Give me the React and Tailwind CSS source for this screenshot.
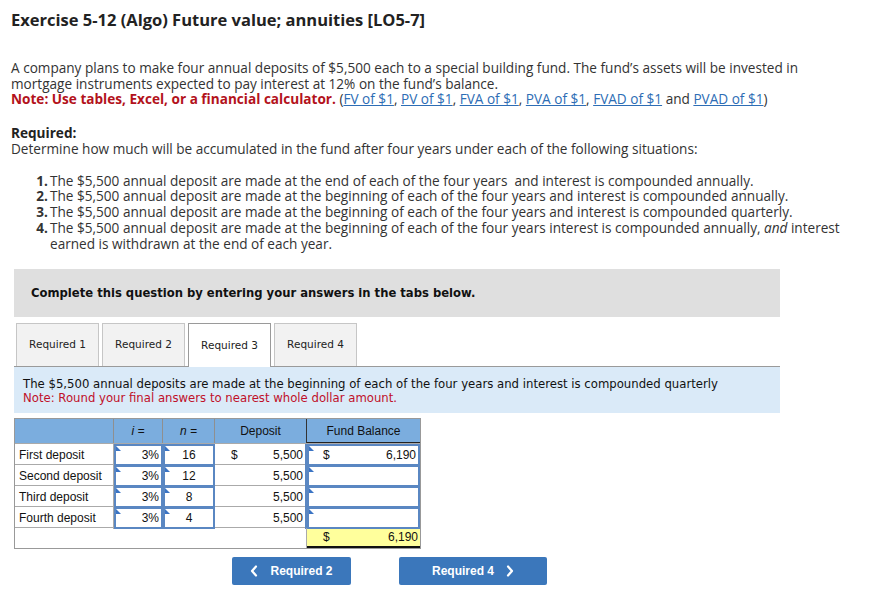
import React from "react";

const Flag = () => (
  <span className="absolute left-0 top-0 h-0 w-0 border-l-[5px] border-t-[5px] border-l-[#3b74c4] border-t-transparent" />
);

function Chevron({ dir = "left" }) {
  return (
    <svg width="8" height="12" viewBox="0 0 8 12" className="inline-block">
      <path
        d={dir === "left" ? "M6 1.5 L2 6 L6 10.5" : "M2 1.5 L6 6 L2 10.5"}
        fill="none"
        stroke="white"
        strokeWidth="2.2"
        strokeLinecap="round"
        strokeLinejoin="round"
      />
    </svg>
  );
}

const rows = [
  { label: "First deposit", i: "3%", n: "16", dollar: true, deposit: "5,500", fund: "6,190" },
  { label: "Second deposit", i: "3%", n: "12", deposit: "5,500", fund: "" },
  { label: "Third deposit", i: "3%", n: "8", deposit: "5,500", fund: "" },
  { label: "Fourth deposit", i: "3%", n: "4", deposit: "5,500", fund: "" },
];

function Links() {
  const items = ["FV of $1", "PV of $1", "FVA of $1", "PVA of $1", "FVAD of $1"];
  return (
    <>
      (
      {items.map((t, k) => (
        <React.Fragment key={t}>
          <a className="inline-block text-[#2d6db5] underline">{t}</a>
          {k < items.length - 1 ? ", " : " "}
        </React.Fragment>
      ))}
      and <a className="inline-block text-[#2d6db5] underline">PVAD of $1</a>)
    </>
  );
}

export default function App() {
  return (
    <div className="min-h-[593px] w-[879px] bg-white font-['Open_Sans',sans-serif] text-[#333]">
      <div className="px-[11px] pt-[10px]">
        <h1 className="text-[16.5px] font-bold leading-[20px] text-[#222]">
          Exercise 5-12 (Algo) Future value; annuities [LO5-7]
        </h1>

        <p className="mt-[30px] text-[13.6px] leading-[15.5px]">
          A company plans to make four annual deposits of $5,500 each to a special building fund. The fund’s assets will be invested in
          <br />
          mortgage instruments expected to pay interest at 12% on the fund’s balance.
          <br />
          <span className="inline-block font-bold text-[#b3121b]">Note: Use tables, Excel, or a financial calculator.</span> <Links />
        </p>

        <p className="mt-[18px] text-[13.6px] font-bold leading-[16px] text-[#222]">Required:</p>
        <p className="text-[13.6px] leading-[16px]">
          Determine how much will be accumulated in the fund after four years under each of the following situations:
        </p>

        <ol className="mt-[16px] pl-[22px] text-[13.6px] leading-[15.75px]">
          <li className="flex">
            <span className="w-[15px] shrink-0 text-right font-bold">1.</span>
            <span className="pl-[2px]">The $5,500 annual deposit are made at the end of each of the four years&nbsp; and interest is compounded annually.</span>
          </li>
          <li className="flex">
            <span className="w-[15px] shrink-0 text-right font-bold">2.</span>
            <span className="pl-[2px]">The $5,500 annual deposit are made at the beginning of each of the four years and interest is compounded annually.</span>
          </li>
          <li className="flex">
            <span className="w-[15px] shrink-0 text-right font-bold">3.</span>
            <span className="pl-[2px]">The $5,500 annual deposit are made at the beginning of each of the four years and interest is compounded quarterly.</span>
          </li>
          <li className="flex">
            <span className="w-[15px] shrink-0 text-right font-bold">4.</span>
            <span className="pl-[2px]">
              The $5,500 annual deposit are made at the beginning of each of the four years interest is compounded annually, <i>and</i> interest
              <br />
              earned is withdrawn at the end of each year.
            </span>
          </li>
        </ol>
      </div>

      <div className="mx-[14px] mt-[18px] w-[766px] font-['DejaVu_Sans',sans-serif]">
        <div className="flex h-[48px] items-center bg-[#dfdfdf] pl-[17px] text-[11.6px] font-bold text-[#111]">
          Complete this question by entering your answers in the tabs below.
        </div>

        <div className="mt-[6px] flex gap-[3px] pl-[2px] text-[10.5px] text-[#222]">
          {["Required 1", "Required 2", "Required 3", "Required 4"].map((t) => (
            <div
              key={t}
              className={
                t === "Required 3"
                  ? "relative z-10 -mb-px flex h-[44px] w-[83px] items-center justify-center border border-b-0 border-[#9a9a9a] bg-white"
                  : "flex h-[43px] w-[83px] items-center justify-center border border-b-0 border-[#c6c6c6] bg-[#f2f2f2]"
              }
            >
              {t}
            </div>
          ))}
        </div>

        <div className="h-[47px] border-t border-[#9a9a9a] bg-[#daeaf8] pl-[9px] pt-[10px] text-[11.7px] leading-[14px]">
          <p className="text-[#111]">
            The $5,500 annual deposits are made at the beginning of each of the four years and interest is compounded quarterly
          </p>
          <p className="text-[#c0102a]">Note: Round your final answers to nearest whole dollar amount.</p>
        </div>

        <div className="mt-[5px] w-[407px] border border-[#999] font-['Liberation_Sans',Arial,sans-serif] text-[12px] text-[#111]">
          <div className="grid h-[24px] grid-cols-[99px_49px_52px_92px_1fr] bg-[#7badde]">
            <div className="border-r border-[#8f8f8f]" />
            <div className="flex items-center justify-center border-r border-[#8f8f8f] italic">i =</div>
            <div className="flex items-center justify-center border-r border-[#8f8f8f] italic">n =</div>
            <div className="flex items-center justify-center border-r border-[#333]">Deposit</div>
            <div className="flex items-center justify-center border-b border-[#222]">Fund Balance</div>
          </div>

          {rows.map((r) => (
            <div key={r.label} className="grid h-[21px] grid-cols-[99px_49px_52px_92px_1fr] border-t border-[#aaa]">
              <div className="flex items-center border-r border-[#aaa] pl-[4px]">{r.label}</div>
              <div className="relative flex items-center justify-end border-2 border-[#5a87c2] pr-[2px]">
                <Flag />
                {r.i}
              </div>
              <div className="relative flex items-center justify-center border-2 border-[#5a87c2]">
                <Flag />
                {r.n}
              </div>
              <div className="flex items-center justify-between border-r-2 border-[#5a87c2] pl-[16px] pr-[2px]">
                <span>{r.dollar ? "$" : ""}</span>
                <span>{r.deposit}</span>
              </div>
              <div className="relative flex items-center justify-between border-2 border-[#5a87c2] pl-[14px] pr-[2px]">
                <Flag />
                <span>{r.fund ? "$" : ""}</span>
                <span>{r.fund}</span>
              </div>
            </div>
          ))}

          <div className="grid h-[21px] grid-cols-[292px_1fr] border-t border-[#aaa]">
            <div className="border-r border-[#aaa]" />
            <div className="flex items-center justify-between border-b-2 border-[#111] bg-[#ffff9c] pl-[16px] pr-[2px]">
              <span>$</span>
              <span>6,190</span>
            </div>
          </div>
        </div>

        <div className="mt-[8px] flex gap-[48px] pl-[218px] font-['Liberation_Sans',Arial,sans-serif] text-[12px] font-bold text-white">
          <button className="flex h-[28px] w-[119px] items-center justify-center gap-[12px] rounded-[2px] bg-[#3b77bb]">
            <Chevron dir="left" />
            Required 2
          </button>
          <button className="flex h-[28px] w-[148px] items-center justify-center gap-[12px] rounded-[2px] bg-[#3b77bb]">
            Required 4
            <Chevron dir="right" />
          </button>
        </div>
      </div>
    </div>
  );
}
